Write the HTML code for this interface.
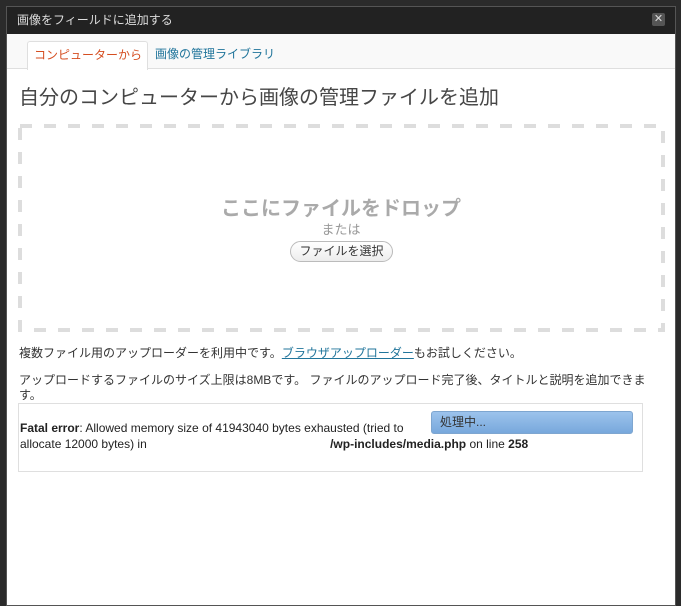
<!DOCTYPE html>
<html><head><meta charset="utf-8"><style>
*{margin:0;padding:0;box-sizing:border-box}
body{width:681px;height:597px;background:#2b2b2b;font-family:"Liberation Sans","Noto Sans CJK JP",sans-serif;position:relative;overflow:hidden}
.m{position:absolute;left:6px;top:6px;width:670px;height:600px;background:#fff;border:1px solid #555}
.hd{height:27px;background:#222;color:#ddd;font-size:12px;line-height:26px;padding-left:10px}
.x{position:absolute;right:10px;top:6px;width:13px;height:13px;background:#555;border-radius:2px;color:#ddd;font-size:11px;line-height:13px;text-align:center}
.tabs{height:35px;background:#f9f9f9;border-bottom:1px solid #dfdfdf;position:relative}
.t{position:absolute;top:7px;height:29px;font-size:12px;line-height:26px;padding:0 6px;white-space:nowrap}
.t1{left:20px;width:121px;background:#fff;border:1px solid #dfdfdf;border-bottom:none;color:#d54e21;border-radius:3px 3px 0 0}
.t2{left:142px;color:#21759b}
h2{position:absolute;left:12px;top:74px;font-size:20px;font-weight:normal;color:#464646;white-space:nowrap}
.dz{position:absolute;left:11px;top:117px}
.dt{position:absolute;left:11px;width:646px;text-align:center;color:#999}
.btn{position:absolute;left:283px;top:234px;width:103px;height:21px;border:1px solid #bbb;border-radius:11px;background:linear-gradient(#fff,#ededed);font-size:12px;line-height:19px;text-align:center;color:#333}
.p{position:absolute;left:12px;font-size:12px;color:#333}
.err{position:absolute;left:11px;top:396px;width:625px;height:69px;border:1px solid #dfdfdf}
.bar{position:absolute;left:412px;top:7px;width:202px;height:23px;border:1px solid #7ea6d0;border-radius:3px;background:linear-gradient(#9cc3ec,#78a8dc);font-size:12px;color:#333;line-height:21px;padding-left:8px}
.e{position:absolute;left:0;font-size:12px;color:#222;font-family:"Liberation Sans",sans-serif;white-space:nowrap}
</style></head><body>
<div class="m">
<div class="hd">画像をフィールドに追加する</div><div class="x">✕</div>
<div class="tabs"><div class="t t1">コンピューターから</div><div class="t t2">画像の管理ライブラリ</div></div>
<h2>自分のコンピューターから画像の管理ファイルを追加</h2>
<svg class="dz" width="647" height="208"><rect x="2" y="2" width="643" height="204" fill="none" stroke="#ddd" stroke-width="4" stroke-dasharray="12 12"/></svg>
<div class="dt" style="top:185px;font-size:20px;font-weight:bold;color:#aaa">ここにファイルをドロップ</div>
<div class="dt" style="top:212px;font-size:13px">または</div>
<div class="btn">ファイルを選択</div>
<div class="p" style="top:337px">複数ファイル用のアップローダーを利用中です。<span style="color:#21759b;text-decoration:underline">ブラウザアップローダー</span>もお試しください。</div>
<div class="p" style="top:366px;width:628px;line-height:15px">アップロードするファイルのサイズ上限は8MBです。 ファイルのアップロード完了後、タイトルと説明を追加できます。</div>
<div class="err"><div class="bar">処理中...</div>
<div class="e" style="top:17px;left:1px"><b>Fatal error</b>: Allowed memory size of 41943040 bytes exhausted (tried to</div>
<div class="e" style="top:33px;left:1px">allocate 12000 bytes) in <span style="display:inline-block;width:180px"></span><b>/wp-includes/media.php</b> on line <b>258</b></div>
</div>
</div>
</body></html>
